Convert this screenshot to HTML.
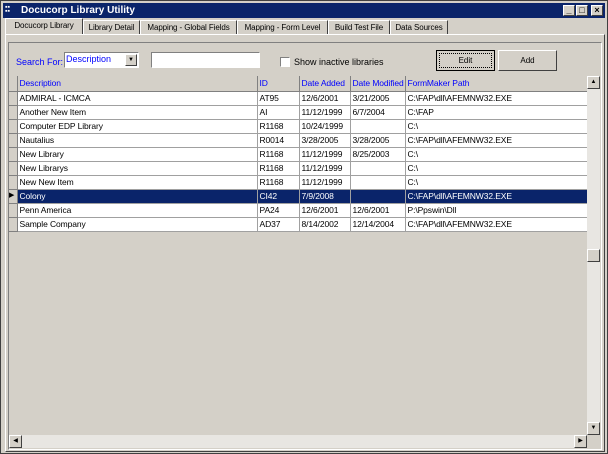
<!DOCTYPE html><html><head><style>
*{box-sizing:border-box;margin:0;padding:0}
body{width:608px;height:454px;background:#d4d0c8;font-family:"Liberation Sans",sans-serif;font-size:9px;position:relative;overflow:hidden;border:1px solid #404040}
.a{position:absolute}
.title{left:2px;top:2px;width:602px;height:15px;background:#0a246a;color:#fff;font-weight:bold;font-size:10px;line-height:15px;padding-left:18px}
.wb{top:4px;width:12px;height:11px;background:#d4d0c8;border:1px solid;border-color:#fff #404040 #404040 #fff;font-size:9px;line-height:9px;text-align:center;color:#000;font-weight:bold}
.tab{top:19px;height:15px;border:1px solid;border-color:#fff #404040 transparent #fff;line-height:13px;padding:0 2px;white-space:nowrap;font-size:8px;letter-spacing:-0.1px;overflow:hidden;text-align:center}
.in{border:1px solid;border-color:#808080 #fff #fff #808080;background:#fff}
table{border-collapse:collapse;table-layout:fixed;position:absolute;left:8px;top:75px}
td{height:14px;border-right:1px solid #a0a0a0;border-bottom:1px solid #a0a0a0;background:#fff;padding-left:2px;white-space:nowrap;overflow:hidden;font-size:8.5px;line-height:12px;letter-spacing:-0.1px}
tr.h td{background:#d4d0c8;color:#00f;border-color:#808080;height:15px}
td.i{background:#d4d0c8;border-color:#808080}
tr.s td{background:#0a246a;color:#fff}
.sb{background:#e8e6e2}
.btn{background:#d4d0c8;border:1px solid;border-color:#fff #404040 #404040 #fff;font-size:8px;text-align:center}
</style></head><body>
<div class="a title">Docucorp Library Utility</div>
<div class="a" style="left:4px;top:5px;width:8px;height:9px;color:#fff;font-size:7px;line-height:4px">▪▪<br>▪▪</div>
<div class="a wb" style="left:562px">_</div><div class="a wb" style="left:575px">□</div><div class="a wb" style="left:590px">×</div>
<div class="a tab" style="left:4px;top:17px;height:17px;width:78px;border-bottom:none;background:#d4d0c8">Docucorp Library</div>
<div class="a tab" style="left:82px;width:57px">Library Detail</div>
<div class="a tab" style="left:139px;width:97px">Mapping - Global Fields</div>
<div class="a tab" style="left:236px;width:91px">Mapping - Form Level</div>
<div class="a tab" style="left:327px;width:62px">Build Test File</div>
<div class="a tab" style="left:389px;width:58px">Data Sources</div>
<div class="a" style="left:4px;top:33px;width:600px;height:418px;border:1px solid;border-color:#fff #404040 #404040 #fff"></div>
<div class="a" style="left:7px;top:41px;width:594px;height:408px;border:1px solid;border-color:#808080 #fff #fff #808080"></div>
<div class="a" style="left:15px;top:56px;color:#00f;font-size:9px">Search For:</div>
<div class="a in" style="left:63px;top:51px;width:75px;height:16px;color:#00f;padding-left:1px;line-height:12px">Description</div>
<div class="a btn" style="left:124px;top:53px;width:12px;height:12px;font-size:6px;line-height:10px">▼</div>
<div class="a in" style="left:150px;top:51px;width:109px;height:16px"></div>
<div class="a in" style="left:279px;top:56px;width:10px;height:10px"></div>
<div class="a" style="left:293px;top:56px">Show inactive libraries</div>
<div class="a btn" style="left:435px;top:49px;width:59px;height:21px;line-height:19px;border-color:#000;outline:1px dotted #000;outline-offset:-4px">Edit</div>
<div class="a btn" style="left:497px;top:49px;width:59px;height:21px;line-height:19px">Add</div>
<table>
<colgroup><col style="width:8px"><col style="width:240px"><col style="width:42px"><col style="width:51px"><col style="width:55px"><col style="width:182px"></colgroup>
<tr class="h"><td class="i"></td><td>Description</td><td>ID</td><td>Date Added</td><td>Date Modified</td><td>FormMaker Path</td></tr>
<tr><td class="i"></td><td>ADMIRAL - ICMCA</td><td>AT95</td><td>12/6/2001</td><td>3/21/2005</td><td>C:\FAP\dll\AFEMNW32.EXE</td></tr>
<tr><td class="i"></td><td>Another New Item</td><td>AI</td><td>11/12/1999</td><td>6/7/2004</td><td>C:\FAP</td></tr>
<tr><td class="i"></td><td>Computer EDP Library</td><td>R1168</td><td>10/24/1999</td><td></td><td>C:\</td></tr>
<tr><td class="i"></td><td>Nautalius</td><td>R0014</td><td>3/28/2005</td><td>3/28/2005</td><td>C:\FAP\dll\AFEMNW32.EXE</td></tr>
<tr><td class="i"></td><td>New Library</td><td>R1168</td><td>11/12/1999</td><td>8/25/2003</td><td>C:\</td></tr>
<tr><td class="i"></td><td>New Librarys</td><td>R1168</td><td>11/12/1999</td><td></td><td>C:\</td></tr>
<tr><td class="i"></td><td>New New Item</td><td>R1168</td><td>11/12/1999</td><td></td><td>C:\</td></tr>
<tr class="s"><td class="i" style="background:#d4d0c8;color:#000;font-size:7px;padding:0">▶</td><td>Colony</td><td>CI42</td><td>7/9/2008</td><td></td><td>C:\FAP\dll\AFEMNW32.EXE</td></tr>
<tr><td class="i"></td><td>Penn America</td><td>PA24</td><td>12/6/2001</td><td>12/6/2001</td><td>P:\Ppswin\Dll</td></tr>
<tr><td class="i"></td><td>Sample Company</td><td>AD37</td><td>8/14/2002</td><td>12/14/2004</td><td>C:\FAP\dll\AFEMNW32.EXE</td></tr>
</table>
<div class="a sb" style="left:586px;top:75px;width:13px;height:359px"></div>
<div class="a btn" style="left:586px;top:75px;width:13px;height:13px;font-size:6px;line-height:11px">▲</div>
<div class="a btn" style="left:586px;top:248px;width:13px;height:13px"></div>
<div class="a btn" style="left:586px;top:421px;width:13px;height:13px;font-size:6px;line-height:11px">▼</div>
<div class="a sb" style="left:8px;top:434px;width:578px;height:13px"></div>
<div class="a btn" style="left:8px;top:434px;width:13px;height:13px;font-size:6px;line-height:11px">◀</div>
<div class="a btn" style="left:573px;top:434px;width:13px;height:13px;font-size:6px;line-height:11px">▶</div>
</body></html>
